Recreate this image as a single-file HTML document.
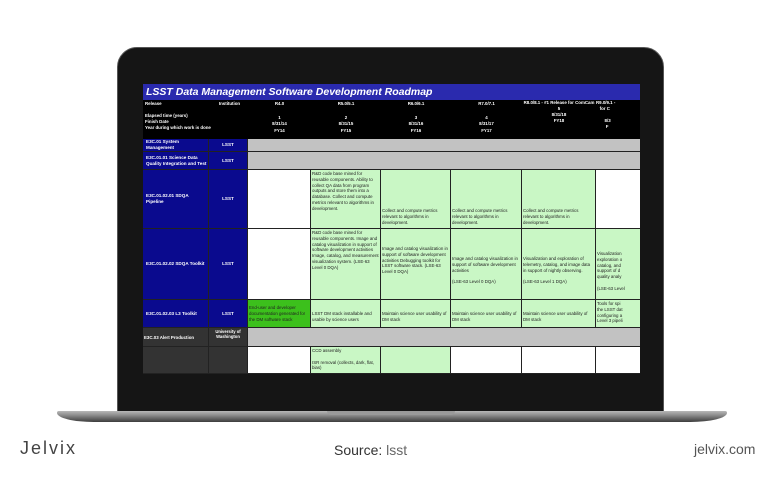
<!DOCTYPE html>
<html><head><meta charset="utf-8"><style>
*{margin:0;padding:0;box-sizing:border-box}
body{width:768px;height:477px;background:#fff;position:relative;overflow:hidden;font-family:"Liberation Sans",sans-serif}
.a{position:absolute}
.c{position:absolute;border-right:1px solid #222;border-bottom:1px solid #222;overflow:hidden;font-size:4.4px;line-height:5.8px;color:#222;padding:1px}
.h{color:#fff;font-weight:bold;font-size:4.4px;text-align:center}
.bl{background:#0a0a8e;color:#fff;font-weight:bold;font-size:4.6px;display:flex;align-items:center;padding-left:3px}
.g{background:#c9f7c5}.gr{background:#c2c2c2}.w{background:#fff}.dg{background:#333;color:#fff;font-weight:bold;font-size:4.4px}
</style></head><body>
<div class="a" style="left:117px;top:47px;width:547px;height:368px;background:#151515;border-radius:20px 20px 4px 4px;border:1px solid #555"></div>
<div class="a" style="left:143px;top:84px;width:497px;height:290px;background:#000"></div>
<div class="a" style="left:57px;top:411px;width:670px;height:11px;background:linear-gradient(#b8b8b8,#8a8a8a 40%,#3c3c3c);border-radius:2px 2px 40px 40px/2px 2px 10px 10px"></div>
<div class="a" style="left:327px;top:411px;width:128px;height:4px;background:#9a9a9a;border-radius:0 0 5px 5px"></div>
<div class="a" style="left:143px;top:84px;width:497px;height:16px;background:#2a2aae;color:#fff;font-weight:bold;font-style:italic;font-size:10.5px;line-height:16px;padding-left:3px;white-space:nowrap">LSST Data Management Software Development Roadmap</div>
<div class="a h" style="left:145px;top:101px;text-align:left;line-height:6px;width:66px">Release<br><br>Elapsed time (years)<br>Finish Date<br>Year during which work is done</div>
<div class="a h" style="left:211px;top:101px;width:37px">Institution</div>
<div class="a h" style="left:248px;top:101px;width:63px;line-height:6.8px">R4.0<br><br>1<br>8/31/14<br>FY14</div>
<div class="a h" style="left:311px;top:101px;width:70px;line-height:6.8px">R5.0/5.1<br><br>2<br>8/31/15<br>FY15</div>
<div class="a h" style="left:381px;top:101px;width:70px;line-height:6.8px">R6.0/6.1<br><br>3<br>8/31/16<br>FY16</div>
<div class="a h" style="left:451px;top:101px;width:71px;line-height:6.8px">R7.0/7.1<br><br>4<br>8/31/17<br>FY17</div>
<div class="a h" style="left:522px;top:100px;width:74px;line-height:6px">R8.0/8.1 - #1 Release for ComCam<br>5<br>8/31/18<br>FY18</div>
<div class="a h" style="left:596px;top:100px;width:44px;line-height:6px;white-space:nowrap;text-align:left">R9.0/9.1 -<br>&nbsp;&nbsp;&nbsp;for C<br><br>&nbsp;&nbsp;&nbsp;&nbsp;&nbsp;&nbsp;&nbsp;8/3<br>&nbsp;&nbsp;&nbsp;&nbsp;&nbsp;&nbsp;&nbsp;&nbsp;F</div>
<div class="c bl" style="left:143px;top:139px;width:66px;height:13px">E3C.01 System Management</div>
<div class="c bl" style="left:209px;top:139px;width:39px;height:13px;justify-content:center;padding:0">LSST</div>
<div class="c gr" style="left:248px;top:139px;width:392px;height:13px;border-right:none"></div>
<div class="c bl" style="left:143px;top:152px;width:66px;height:18px">E3C.01.01 Science Data Quality Integration and Test</div>
<div class="c bl" style="left:209px;top:152px;width:39px;height:18px;justify-content:center;padding:0">LSST</div>
<div class="c gr" style="left:248px;top:152px;width:392px;height:18px;border-right:none"></div>
<div class="c bl" style="left:143px;top:170px;width:66px;height:59px">E3C.01.02.01 SDQA Pipeline</div>
<div class="c bl" style="left:209px;top:170px;width:39px;height:59px;justify-content:center;padding:0">LSST</div>
<div class="c w" style="left:248px;top:170px;width:63px;height:59px"></div>
<div class="c g" style="left:311px;top:170px;width:70px;height:59px">R&amp;D code base mined for reusable components. Ability to collect QA data from program outputs and store them into a database. Collect and compute metrics relevant to algorithms in development.</div>
<div class="c g" style="left:381px;top:170px;width:70px;height:59px;padding-top:38px">Collect and compute metrics relevant to algorithms in development.</div>
<div class="c g" style="left:451px;top:170px;width:71px;height:59px;padding-top:38px">Collect and compute metrics relevant to algorithms in development.</div>
<div class="c g" style="left:522px;top:170px;width:74px;height:59px;padding-top:38px">Collect and compute metrics relevant to algorithms in development.</div>
<div class="c w" style="left:596px;top:170px;width:44px;height:59px;border-right:none"></div>
<div class="c bl" style="left:143px;top:229px;width:66px;height:71px">E3C.01.02.02 SDQA Toolkit</div>
<div class="c bl" style="left:209px;top:229px;width:39px;height:71px;justify-content:center;padding:0">LSST</div>
<div class="c w" style="left:248px;top:229px;width:63px;height:71px"></div>
<div class="c g" style="left:311px;top:229px;width:70px;height:71px">R&amp;D code base mined for reusable components. Image and catalog visualization in support of software development activities Image, catalog, and measurement visualization system. (LSE-63 Level 0 DQA)</div>
<div class="c g" style="left:381px;top:229px;width:70px;height:71px;padding-top:17px">Image and catalog visualization in support of software development activities Debugging toolkit for LSST software stack. (LSE-63 Level 0 DQA)</div>
<div class="c g" style="left:451px;top:229px;width:71px;height:71px;padding-top:27px">Image and catalog visualization in support of software development activities<br><br>(LSE-63 Level 0 DQA)</div>
<div class="c g" style="left:522px;top:229px;width:74px;height:71px;padding-top:27px">Visualization and exploration of telemetry, catalog, and image data in support of nightly observing.<br><br>(LSE-63 Level 1 DQA)</div>
<div class="c g" style="left:596px;top:229px;width:44px;height:71px;padding-top:22px;border-right:none;white-space:nowrap">Visualization<br>exploration o<br>catalog, and<br>support of d<br>quality analy<br><br>(LSE-63 Level</div>
<div class="c bl" style="left:143px;top:300px;width:66px;height:28px">E3C.01.02.03 L3 Toolkit</div>
<div class="c bl" style="left:209px;top:300px;width:39px;height:28px;justify-content:center;padding:0">LSST</div>
<div class="c" style="left:248px;top:300px;width:63px;height:28px;background:#3cc01c;padding-top:5px">End-user and developer documentation generated for the DM software stack</div>
<div class="c g" style="left:311px;top:300px;width:70px;height:28px;padding-top:11px">LSST DM stack installable and usable by science users</div>
<div class="c g" style="left:381px;top:300px;width:70px;height:28px;padding-top:11px">Maintain science user usability of DM stack</div>
<div class="c g" style="left:451px;top:300px;width:71px;height:28px;padding-top:11px">Maintain science user usability of DM stack</div>
<div class="c g" style="left:522px;top:300px;width:74px;height:28px;padding-top:11px">Maintain science user usability of DM stack</div>
<div class="c g" style="left:596px;top:300px;width:44px;height:28px;border-right:none;white-space:nowrap">Tools for spi<br>the LSST dat<br>configuring a<br>Level 3 pipeli</div>
<div class="c dg" style="left:143px;top:328px;width:66px;height:19px;padding-top:7px">E3C.03 Alert Production</div>
<div class="c dg" style="left:209px;top:328px;width:39px;height:19px;text-align:center;font-size:4.2px;line-height:5px">University of Washington</div>
<div class="c gr" style="left:248px;top:328px;width:392px;height:19px;border-right:none"></div>
<div class="c dg" style="left:143px;top:347px;width:66px;height:27px"></div>
<div class="c dg" style="left:209px;top:347px;width:39px;height:27px"></div>
<div class="c w" style="left:248px;top:347px;width:63px;height:27px"></div>
<div class="c g" style="left:311px;top:347px;width:70px;height:27px">CCD assembly<br><br>ISR removal (collects, dark, flat, bias)</div>
<div class="c g" style="left:381px;top:347px;width:70px;height:27px"></div>
<div class="c w" style="left:451px;top:347px;width:71px;height:27px"></div>
<div class="c w" style="left:522px;top:347px;width:74px;height:27px"></div>
<div class="c w" style="left:596px;top:347px;width:44px;height:27px;border-right:none"></div>
<div class="a" style="left:20px;top:438px;font-size:18px;color:#444;letter-spacing:2px">Jelvix</div>
<div class="a" style="left:334px;top:442px;font-size:14px;color:#333">Source: <span style="color:#666">lsst</span></div>
<div class="a" style="left:694px;top:441px;font-size:14px;color:#555">jelvix.com</div>
</body></html>
